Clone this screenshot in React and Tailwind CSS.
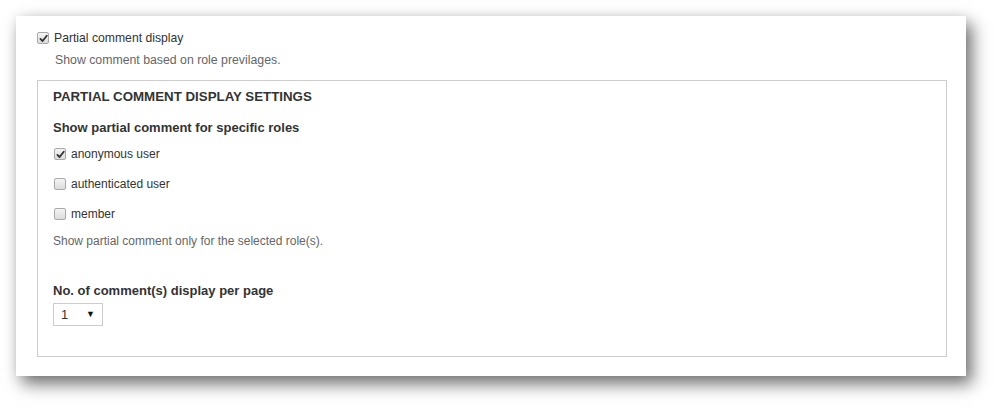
import React from "react";

function Box({ checked }) {
  return (
    <span className="flex h-[12px] w-[12px] shrink-0 items-center justify-center rounded-[2px] border border-[#a9a9a9] bg-gradient-to-b from-[#f4f4f4] to-[#dcdcdc]">
      {checked && (
        <svg width="9" height="9" viewBox="0 0 10 10">
          <path d="M1.6 5.4 L4 7.8 L8.6 2" fill="none" stroke="#333" strokeWidth="2" strokeLinecap="round" strokeLinejoin="round" />
        </svg>
      )}
    </span>
  );
}

const roles = [
  { name: "anonymous user", checked: true },
  { name: "authenticated user", checked: false },
  { name: "member", checked: false },
];

export default function App() {
  return (
    <div className="h-[412px] w-[1002px] bg-white pl-4 pt-4 font-['Liberation_Sans',Arial,sans-serif] text-[12px] text-[#333]">
      <div className="h-[360px] w-[950px] bg-white pl-[21px] pt-[13px] shadow-[6px_8px_16px_rgba(0,0,0,0.55),0_0_12px_rgba(0,0,0,0.08)]">
        <div className="flex h-[18px] items-center gap-[5px]">
          <Box checked />
          <span className="text-[12.2px]">Partial comment display</span>
        </div>
        <div className="ml-[18px] mt-[4px] h-[18px] text-[12.3px] leading-[18px] text-[#666]">Show comment based on role previlages.</div>
        <div className="mt-[11px] h-[277px] w-[910px] border border-[#ccc] pl-[15px] pt-[7px]">
          <div className="h-[18px] text-[13.3px] font-bold leading-[18px] text-[#333]">PARTIAL COMMENT DISPLAY SETTINGS</div>
          <div className="mt-[13px] h-[18px] text-[13px] font-bold leading-[18px]">Show partial comment for specific roles</div>
          <div className="mt-[2px] flex flex-col">
            {roles.map((r) => (
              <div key={r.name} className="flex h-[30px] items-center gap-[5px] pl-px">
                <Box checked={r.checked} />
                <span>{r.name}</span>
              </div>
            ))}
          </div>
          <div className="h-[24px] leading-[24px] text-[#666]">Show partial comment only for the selected role(s).</div>
          <div className="mt-[29px] h-[18px] text-[13px] font-bold leading-[18px]">No. of comment(s) display per page</div>
          <div className="mt-[3px] flex h-[23px] w-[50px] items-center justify-between border border-[#ccc] pl-[7px] pr-[7px] text-[13px]">
            <span>1</span>
            <span className="text-[9px] text-[#111]">▼</span>
          </div>
        </div>
      </div>
    </div>
  );
}
